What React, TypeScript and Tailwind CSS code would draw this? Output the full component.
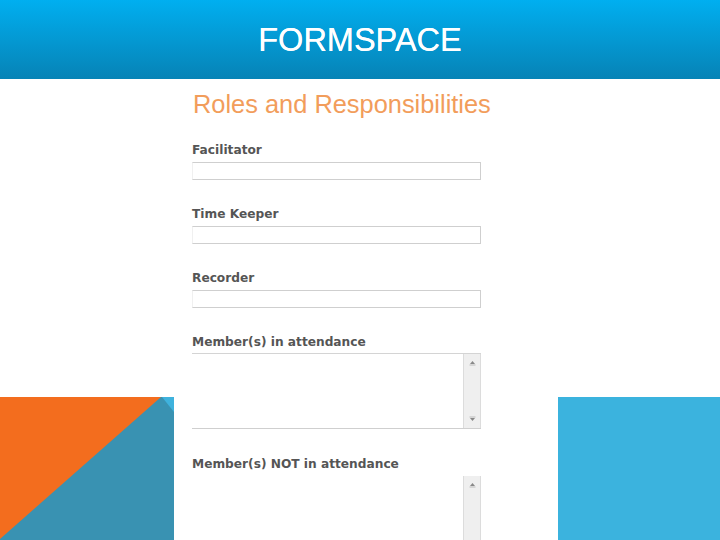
import React from "react";

function ScrollBar() {
  return (
    <div className="w-[18px] h-full bg-[#efefef] border-l border-r border-[#dcdcdc] flex flex-col justify-between items-center py-[6px]">
      <svg width="7" height="6" viewBox="0 0 7 6">
        <path d="M3.5 1 L6 4 L1 4 Z" fill="#888" />
        <path d="M0.5 5 H6.5" stroke="#bbb" strokeWidth="1" />
      </svg>
      <svg width="7" height="6" viewBox="0 0 7 6">
        <path d="M0.5 1 H6.5" stroke="#bbb" strokeWidth="1" />
        <path d="M1 2 L6 2 L3.5 5 Z" fill="#888" />
      </svg>
    </div>
  );
}

function Field({ label }: { label: string }) {
  return (
    <div className="flex flex-col mb-[27px]">
      <div className="h-[14px] leading-[14px] text-[12.2px] font-bold text-[#555] font-['DejaVu_Sans',sans-serif]">
        {label}
      </div>
      <div className="mt-[5px] w-[289px] h-[18px] border border-[#cfcfcf] border-l-[#f0f0f0] bg-white" />
    </div>
  );
}

function AreaField({ label, faintTop, height }: { label: string; faintTop?: boolean; height: string }) {
  return (
    <div className="flex flex-col mb-[28px]">
      <div className="h-[14px] leading-[14px] text-[12.2px] font-bold text-[#555] font-['DejaVu_Sans',sans-serif]">
        {label}
      </div>
      <div
        className={
          "mt-[4px] w-[289px] flex flex-row bg-white border-b border-[#cfcfcf] " +
          (faintTop ? "border-t border-t-white " : "border-t border-t-[#d4d4d4] ") +
          height
        }
      >
        <div className="flex-1" />
        <ScrollBar />
      </div>
    </div>
  );
}

export default function App() {
  return (
    <div className="w-[720px] h-[540px] flex flex-col bg-white overflow-hidden font-['Liberation_Sans',Arial,sans-serif]">
      <header className="h-[79px] shrink-0 bg-gradient-to-b from-[#00aff0] to-[#0683b6] flex items-center justify-center">
        <h1 className="text-white text-[32.5px] leading-none pt-[2px] [text-shadow:0_0_0.6px_#fff] font-['Liberation_Sans',Arial,sans-serif]">
          FORMSPACE
        </h1>
      </header>
      <div className="flex-1 flex flex-row min-h-0">
        <div className="w-[174px] flex flex-col justify-end">
          <svg width="174" height="143" viewBox="0 0 174 143" className="block">
            <rect x="0" y="0" width="174" height="143" fill="#3992b2" />
            <polygon points="0,0 161,0 0,142" fill="#f36d1e" />
            <polygon points="162,0 174,0 174,15" fill="#3fb2dd" />
          </svg>
        </div>
        <div className="w-[384px] bg-white pl-[18px] pt-[10px] flex flex-col overflow-hidden">
          <div className="h-[30px] leading-[30px] text-[25.4px] text-[#f29d5b] pl-[1px] font-['Liberation_Sans',Arial,sans-serif]">
            Roles and Responsibilities
          </div>
          <div className="h-[24px] shrink-0" />
          <Field label="Facilitator" />
          <Field label="Time Keeper" />
          <Field label="Recorder" />
          <AreaField label="Member(s) in attendance" height="h-[76px]" />
          <AreaField label="Member(s) NOT in attendance" faintTop height="h-[80px]" />
        </div>
        <div className="flex-1 flex flex-col justify-end">
          <div className="h-[143px] bg-[#3bb3de]" />
        </div>
      </div>
    </div>
  );
}
